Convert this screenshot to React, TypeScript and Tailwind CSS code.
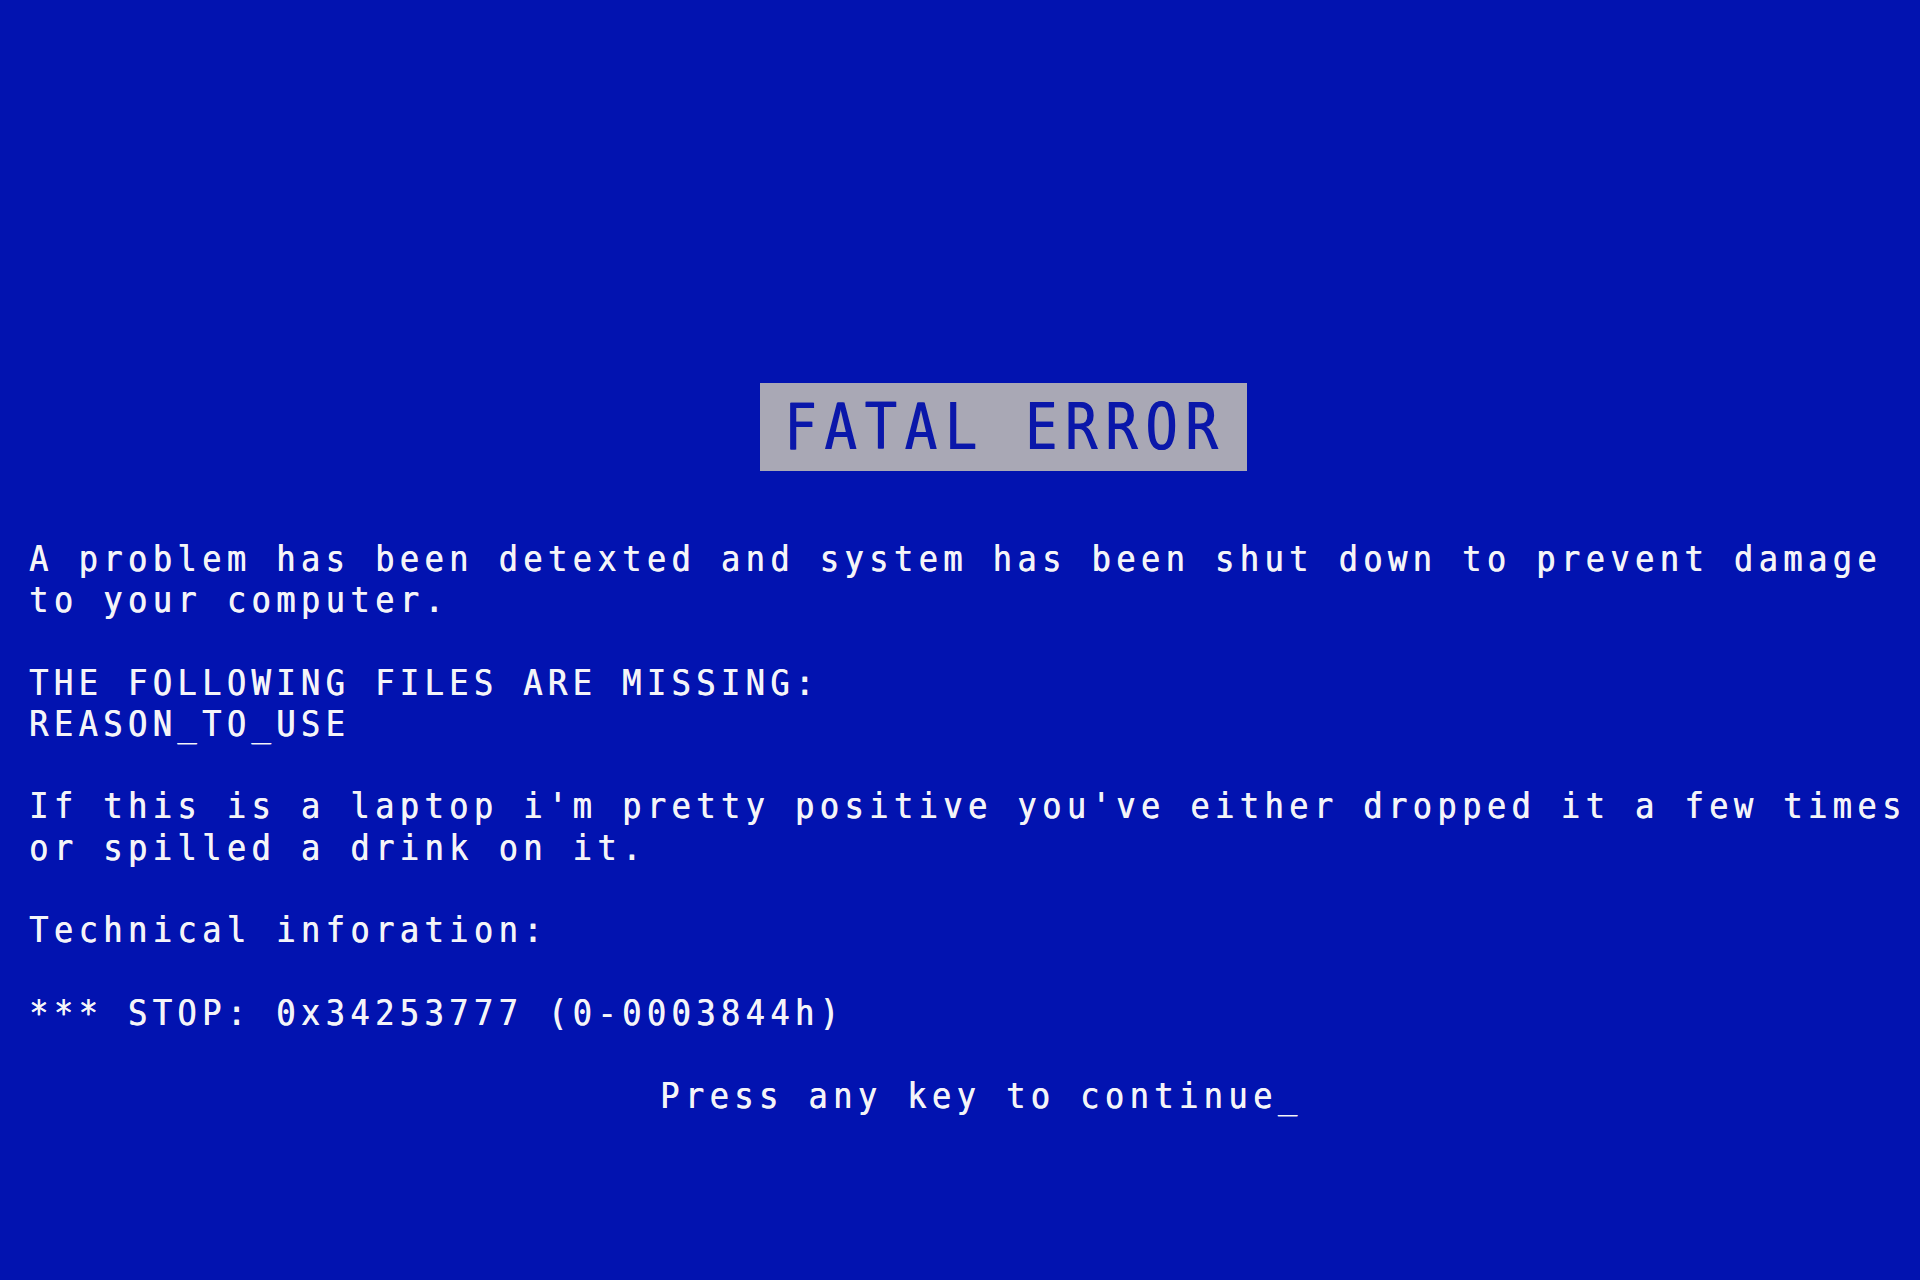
export default function App() {
  const lines: string[] = [
    "A problem has been detexted and system has been shut down to prevent damage",
    "to your computer.",
    "",
    "THE FOLLOWING FILES ARE MISSING:",
    "REASON_TO_USE",
    "",
    "If this is a laptop i'm pretty positive you've either dropped it a few times",
    "or spilled a drink on it.",
    "",
    "Technical inforation:",
    "",
    "*** STOP: 0x34253777 (0-0003844h)",
    "",
  ];
  return (
    <div className="w-[1920px] h-[1280px] bg-[#0213b0] overflow-hidden font-['DejaVu_Sans_Mono',monospace]">
      <div className="pt-[383px]">
        <div className="pl-[760px]">
          <div className="w-[487px] h-[88px] bg-[#a9a8b5] flex items-center pl-[24px]">
            <span className="inline-block scale-y-[1.2] text-[54px] leading-none tracking-[7.6px] text-[#0a17aa] [text-shadow:0.8px_0_0_#0a17aa]">
              FATAL ERROR
            </span>
          </div>
        </div>
        <div className="mt-[67px] pl-[29px] origin-top scale-y-[1.087] text-[32px] leading-[38px] tracking-[5.44px] text-[#f4f4f8] whitespace-pre [text-shadow:0.6px_0_0_#f4f4f8]">
          {lines.map((l, i) => (
            <div key={i} className="h-[38px]">
              {l}
            </div>
          ))}
          <div className="h-[38px] pl-[631px]">Press any key to continue_</div>
        </div>
      </div>
    </div>
  );
}
